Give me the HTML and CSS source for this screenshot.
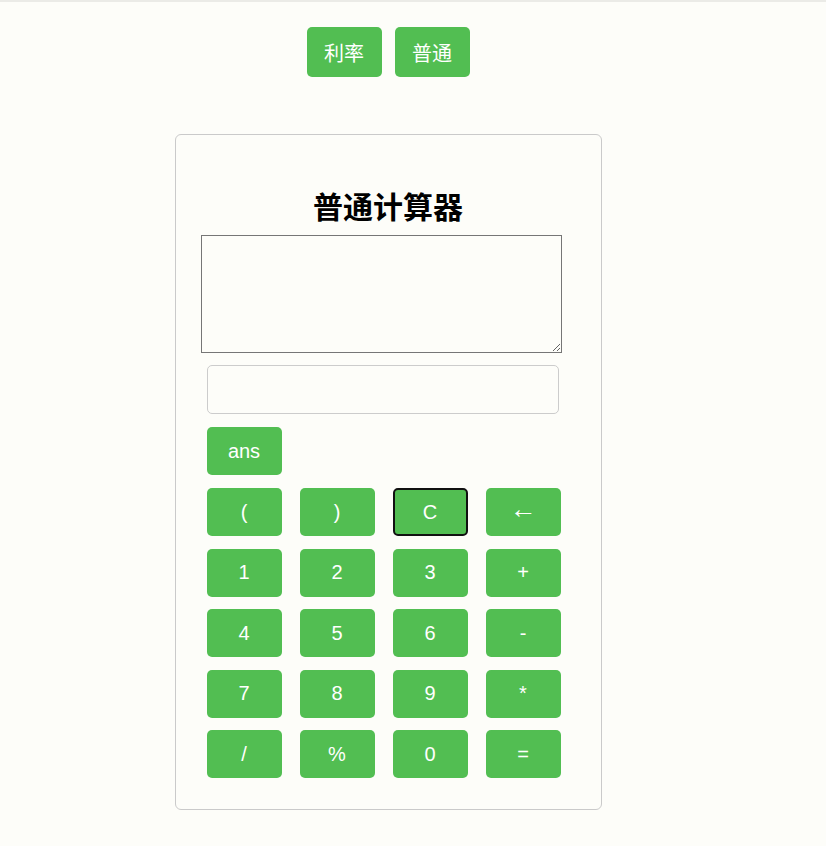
FILE: index.html
```html
<!DOCTYPE html>
<html lang="zh">
<head>
<meta charset="utf-8">
<title>普通计算器</title>
<link rel="stylesheet" href="styles.css">
</head>
<body>
<div class="topline"></div>
<div class="page">
  <nav class="nav">
    <button class="navbtn">利率</button>
    <button class="navbtn">普通</button>
  </nav>
  <div class="card">
    <h1 class="title">普通计算器</h1>
    <textarea class="expr"></textarea>
    <input class="result" type="text">
    <div class="ansrow">
      <button class="key">ans</button>
    </div>
    <div class="keys">
      <button class="key">(</button>
      <button class="key">)</button>
      <button class="key focused">C</button>
      <button class="key arrow">←</button>
      <button class="key">1</button>
      <button class="key">2</button>
      <button class="key">3</button>
      <button class="key">+</button>
      <button class="key">4</button>
      <button class="key">5</button>
      <button class="key">6</button>
      <button class="key">-</button>
      <button class="key">7</button>
      <button class="key">8</button>
      <button class="key">9</button>
      <button class="key">*</button>
      <button class="key">/</button>
      <button class="key">%</button>
      <button class="key">0</button>
      <button class="key">=</button>
    </div>
  </div>
</div>
</body>
</html>
```

FILE: styles.css
```css
* { box-sizing: border-box; }
body {
  margin: 0;
  background: #fdfdf9;
  font-family: "Liberation Sans", "Noto Sans CJK SC", sans-serif;
}
.topline {
  height: 2px;
  background: #ebebe7;
}
.page {
  width: 776px;
  display: flex;
  flex-direction: column;
  align-items: center;
}
.nav {
  display: flex;
  gap: 13px;
  padding-top: 25px;
}
.navbtn {
  width: 75px;
  height: 50px;
  border: none;
  border-radius: 5px;
  background: #52be52;
  color: #ffffff;
  font-family: "Noto Sans CJK SC", sans-serif;
  font-size: 20px;
  padding: 0;
}
.card {
  margin-top: 57px;
  width: 427px;
  border: 1px solid #cacaca;
  border-radius: 6px;
  padding: 52px 25px 31px 25px;
  display: flex;
  flex-direction: column;
  align-items: flex-start;
}
.title {
  align-self: center;
  margin: 0 0 12px 0;
  font-family: "Noto Sans CJK SC", sans-serif;
  font-weight: 700;
  font-size: 30px;
  line-height: 36px;
  color: #000;
}
.expr {
  width: 361px;
  height: 118px;
  margin: 0;
  border: 1px solid #767676;
  border-radius: 0;
  background: transparent;
  display: block;
}
.result {
  margin: 12px 0 0 6px;
  width: 352px;
  height: 49px;
  border: 1px solid #cccccc;
  border-radius: 5px;
  background: transparent;
  display: block;
}
.ansrow {
  margin: 13px 0 0 6px;
}
.keys {
  margin: 13px 0 0 6px;
  display: grid;
  grid-template-columns: repeat(4, 75px);
  column-gap: 18px;
  row-gap: 12.5px;
}
.key {
  width: 75px;
  height: 48px;
  border: none;
  border-radius: 5px;
  background: #52be52;
  color: #ffffff;
  font-family: "Liberation Sans", sans-serif;
  font-size: 20px;
  padding: 0;
}
.key.focused {
  border: 2px solid #111;
}
.key.arrow {
  font-size: 27px;
  line-height: 1;
  padding-bottom: 6px;
}
```
